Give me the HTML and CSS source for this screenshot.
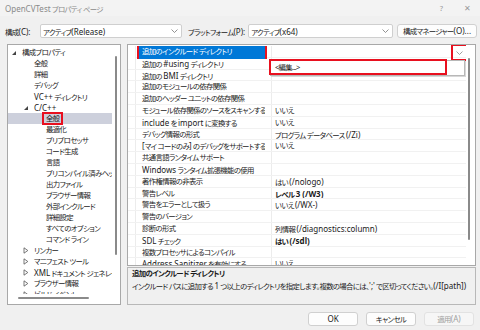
FILE: index.html
```html
<!DOCTYPE html>
<html lang="ja">
<head>
<meta charset="utf-8">
<link rel="stylesheet" href="styles.css">
</head>
<body>
<div class="titlebar">
  <span class="title"><span class="en">OpenCVTest</span> プロパティ ページ</span>
  <span class="tb-btns"><span class="help">?</span><span class="close">✕</span></span>
</div>
<div class="toolbar">
  <span class="lbl lbl1">構成<span class="en">(C):</span></span>
  <div class="select sel1"><span>アクティブ<span class="en">(Release)</span></span><svg class="chev" width="7" height="4" viewBox="0 0 7 4"><polyline points="0.5,0.5 3.5,3.5 6.5,0.5" fill="none" stroke="#777" stroke-width="0.8"/></svg></div>
  <span class="lbl lbl2">プラットフォーム<span class="en">(P):</span></span>
  <div class="select sel2"><span>アクティブ<span class="en">(x64)</span></span><svg class="chev" width="7" height="4" viewBox="0 0 7 4"><polyline points="0.5,0.5 3.5,3.5 6.5,0.5" fill="none" stroke="#777" stroke-width="0.8"/></svg></div>
  <button class="btn mgr">構成マネージャー<span class="en">(O)...</span></button>
</div>
<div class="main">
  <div class="tree">
    <div class="tree-list">
      <div class="node l0"><span class="tg"><svg width="6" height="6" viewBox="0 0 6 6"><polygon points="5,1 5,5 1,5" fill="#444"/></svg></span><span class="lab">構成プロパティ</span></div>
      <div class="node l1"><span class="tg"></span><span class="lab">全般</span></div>
      <div class="node l1"><span class="tg"></span><span class="lab">詳細</span></div>
      <div class="node l1"><span class="tg"></span><span class="lab">デバッグ</span></div>
      <div class="node l1"><span class="tg"></span><span class="lab"><span class="en">VC++</span> ディレクトリ</span></div>
      <div class="node l1"><span class="tg"><svg width="6" height="6" viewBox="0 0 6 6"><polygon points="5,1 5,5 1,5" fill="#444"/></svg></span><span class="lab"><span class="en">C/C++</span></span></div>
      <div class="node l2 sel"><span class="tg"></span><span class="lab mark">全般</span></div>
      <div class="node l2"><span class="tg"></span><span class="lab">最適化</span></div>
      <div class="node l2"><span class="tg"></span><span class="lab">プリプロセッサ</span></div>
      <div class="node l2"><span class="tg"></span><span class="lab">コード生成</span></div>
      <div class="node l2"><span class="tg"></span><span class="lab">言語</span></div>
      <div class="node l2"><span class="tg"></span><span class="lab">プリコンパイル済みヘッダー</span></div>
      <div class="node l2"><span class="tg"></span><span class="lab">出力ファイル</span></div>
      <div class="node l2"><span class="tg"></span><span class="lab">ブラウザー情報</span></div>
      <div class="node l2"><span class="tg"></span><span class="lab">外部インクルード</span></div>
      <div class="node l2"><span class="tg"></span><span class="lab">詳細設定</span></div>
      <div class="node l2"><span class="tg"></span><span class="lab">すべてのオプション</span></div>
      <div class="node l2"><span class="tg"></span><span class="lab">コマンド ライン</span></div>
      <div class="node l1"><span class="tg"><svg width="6" height="7" viewBox="0 0 6 7"><polygon points="1,0.8 4.8,3.5 1,6.2" fill="none" stroke="#555" stroke-width="0.8"/></svg></span><span class="lab">リンカー</span></div>
      <div class="node l1"><span class="tg"><svg width="6" height="7" viewBox="0 0 6 7"><polygon points="1,0.8 4.8,3.5 1,6.2" fill="none" stroke="#555" stroke-width="0.8"/></svg></span><span class="lab">マニフェスト ツール</span></div>
      <div class="node l1"><span class="tg"><svg width="6" height="7" viewBox="0 0 6 7"><polygon points="1,0.8 4.8,3.5 1,6.2" fill="none" stroke="#555" stroke-width="0.8"/></svg></span><span class="lab"><span class="en">XML</span> ドキュメント ジェネレーター</span></div>
      <div class="node l1"><span class="tg"><svg width="6" height="7" viewBox="0 0 6 7"><polygon points="1,0.8 4.8,3.5 1,6.2" fill="none" stroke="#555" stroke-width="0.8"/></svg></span><span class="lab">ブラウザー情報</span></div>
      <div class="node l1"><span class="tg"><svg width="6" height="7" viewBox="0 0 6 7"><polygon points="1,0.8 4.8,3.5 1,6.2" fill="none" stroke="#555" stroke-width="0.8"/></svg></span><span class="lab">ビルド イベント</span></div>
    </div>
    <div class="vscroll"><div class="thumb"></div></div>
    <div class="hscroll"><div class="thumb"></div></div>
  </div>
  <div class="right">
    <div class="grid">
      <div class="rows">
        <div class="row"><span class="gut"></span><span class="name"><span class="nl selected">追加のインクルード ディレクトリ</span></span><span class="val edit"><span class="ddbtn"><svg width="7" height="4" viewBox="0 0 7 4"><polyline points="0.5,0.5 3.5,3.5 6.5,0.5" fill="none" stroke="#888" stroke-width="0.8"/></svg></span></span></div>
        <div class="row"><span class="gut"></span><span class="name"><span class="nl">追加の <span class="en">#using</span> ディレクトリ</span></span><span class="val"></span></div>
        <div class="row"><span class="gut"></span><span class="name"><span class="nl">追加の <span class="en">BMI</span> ディレクトリ</span></span><span class="val"></span></div>
        <div class="row"><span class="gut"></span><span class="name"><span class="nl">追加のモジュールの依存関係</span></span><span class="val"></span></div>
        <div class="row"><span class="gut"></span><span class="name"><span class="nl">追加のヘッダー ユニットの依存関係</span></span><span class="val"></span></div>
        <div class="row"><span class="gut"></span><span class="name"><span class="nl">モジュール依存関係のソースをスキャンする</span></span><span class="val">いいえ</span></div>
        <div class="row"><span class="gut"></span><span class="name"><span class="nl"><span class="en">include</span> を <span class="en">import</span> に変換する</span></span><span class="val">いいえ</span></div>
        <div class="row"><span class="gut"></span><span class="name"><span class="nl">デバッグ情報の形式</span></span><span class="val">プログラム データベース <span class="en">(/Zi)</span></span></div>
        <div class="row"><span class="gut"></span><span class="name"><span class="nl"><span class="en">[</span>マイ コードのみ<span class="en">]</span> のデバッグをサポートする</span></span><span class="val">いいえ</span></div>
        <div class="row"><span class="gut"></span><span class="name"><span class="nl">共通言語ランタイム サポート</span></span><span class="val"></span></div>
        <div class="row"><span class="gut"></span><span class="name"><span class="nl"><span class="en">Windows</span> ランタイム拡張機能の使用</span></span><span class="val"></span></div>
        <div class="row"><span class="gut"></span><span class="name"><span class="nl">著作権情報の非表示</span></span><span class="val">はい <span class="en">(/nologo)</span></span></div>
        <div class="row"><span class="gut"></span><span class="name"><span class="nl">警告レベル</span></span><span class="val b">レベル <span class="en">3 (/W3)</span></span></div>
        <div class="row"><span class="gut"></span><span class="name"><span class="nl">警告をエラーとして扱う</span></span><span class="val">いいえ <span class="en">(/WX-)</span></span></div>
        <div class="row"><span class="gut"></span><span class="name"><span class="nl">警告のバージョン</span></span><span class="val"></span></div>
        <div class="row"><span class="gut"></span><span class="name"><span class="nl">診断の形式</span></span><span class="val">列情報 <span class="en">(/diagnostics:column)</span></span></div>
        <div class="row"><span class="gut"></span><span class="name"><span class="nl"><span class="en">SDL</span> チェック</span></span><span class="val b">はい <span class="en">(/sdl)</span></span></div>
        <div class="row"><span class="gut"></span><span class="name"><span class="nl">複数プロセッサによるコンパイル</span></span><span class="val"></span></div>
        <div class="row"><span class="gut"></span><span class="name"><span class="nl"><span class="en">Address Sanitizer</span> を有効にする</span></span><span class="val">いいえ</span></div>
      </div>
      <div class="gscroll"><div class="thumb"></div></div>
      <div class="ddlist"><div class="dditem">&lt;編集...&gt;</div></div>
    </div>
    <div class="desc">
      <div class="dt">追加のインクルード ディレクトリ</div>
      <div class="dd">インクルード パスに追加する <span class="en">1</span> つ以上のディレクトリを指定します。複数の場合には、<span class="en">';'</span> で区切ってください。<span class="en">(/I[path])</span></div>
    </div>
  </div>
</div>
<div class="footer">
  <button class="btn fbtn"><span class="en">OK</span></button>
  <button class="btn fbtn">キャンセル</button>
  <button class="btn fbtn dis">適用<span class="en">(A)</span></button>
</div>
</body>
</html>
```
FILE: styles.css
```css
* { box-sizing: border-box; }
body {
  margin: 0;
  width: 480px;
  height: 330px;
  overflow: hidden;
  background: #f0f0f0;
  font-family: "Noto Sans", "Noto Sans CJK JP", sans-serif;
  font-size: 7.4px;
  color: #1a1a1a;
  font-feature-settings: "palt";
  letter-spacing: -0.65px;
  white-space: nowrap;
}
.en { font-size: 8px; letter-spacing: 0; }
.titlebar {
  height: 16px;
  display: flex;
  align-items: center;
  padding: 0 9px 0 5px;
  background: #f3f3f3;
}
.title { color: #8a8a8a; flex: 1; padding-top: 1px; }
.tb-btns { display: flex; gap: 21px; color: #999; letter-spacing: 0; font-size: 7.5px; }

.toolbar {
  margin-top: 8px;
  height: 14px;
  display: flex;
  align-items: center;
  padding: 0 3px 0 5px;
}
.lbl { flex: none; }
.lbl1 { width: 35px; }
.lbl2 { margin-left: 6px; margin-right: 3px; }
.select {
  flex: none;
  height: 14px;
  background: #fff;
  border: 1px solid #cfcfcf;
  border-radius: 2px;
  display: flex;
  align-items: center;
  justify-content: space-between;
  padding: 0 3px 0 2px;
}
.sel1 { width: 142px; }
.sel2 { width: 145px; }
.chev { display: block; }
.btn {
  font: inherit;
  letter-spacing: inherit;
  color: #1a1a1a;
  background: #fdfdfd;
  border: 1px solid #d0d0d0;
  border-radius: 3px;
  padding: 0;
  height: 14px;
  line-height: 12px;
  white-space: nowrap;
}
.mgr { width: 80px; margin-left: auto; flex: none; }

.main {
  margin-top: 6px;
  height: 261px;
  display: flex;
  padding-left: 7px;
  gap: 6px;
}
.tree {
  width: 114px;
  border: 1px solid #a8a8a8;
  background: #fff;
  display: grid;
  grid-template-columns: 1fr 8px;
  grid-template-rows: 1fr 10px;
  min-width: 0;
}
.tree-list {
  padding-top: 2px;
  overflow: hidden;
  min-height: 0;
  min-width: 0;
}
.node {
  height: 11px;
  display: flex;
  align-items: center;
}
.node.l1 { padding-left: 12px; }
.node.l2 { padding-left: 24px; }
.node.sel { background: #cdd0dc; }
.tg {
  width: 11px;
  flex: none;
  display: flex;
  align-items: center;
  justify-content: center;
}
.tg svg { display: block; }
.lab { padding: 0 3px; line-height: 11px; }
.lab.mark { outline: 2px solid #e8101f; outline-offset: -1px; }
.vscroll { grid-column: 2; grid-row: 1; }
.vscroll .thumb {
  width: 2px;
  margin-left: 3px;
  margin-top: 11px;
  height: 199px;
  background: #8a8a8a;
  border-radius: 1px;
}
.hscroll { grid-column: 1; grid-row: 2; }
.hscroll .thumb {
  height: 2px;
  margin-top: 3px;
  margin-left: 10px;
  width: 71px;
  background: #8a8a8a;
  border-radius: 1px;
}

.right {
  width: 349px;
  display: flex;
  flex-direction: column;
  gap: 1px;
}
.grid {
  height: 222px;
  border: 1px solid #a8a8a8;
  background: #fff;
  display: flex;
  position: relative;
  overflow: hidden;
}
.rows { flex: 1; padding-top: 1px; overflow: hidden; }
.row {
  height: 11.8px;
  display: grid;
  grid-template-columns: 8px 135px 1fr;
  border-bottom: 1px solid #f1f1f1;
}
.gut { background: #fff; border-right: 1px solid #ececec; }
.name { padding: 0 6px 0 3px; overflow: hidden; }
.nl { display: block; height: 100%; padding-left: 3px; line-height: 11px; overflow: hidden; }
.nl.selected {
  background: #0078d7;
  color: #fff;
  outline: 2px solid #e8101f;
  outline-offset: 0px;
}
.val { border-left: 1px solid #ececec; padding-left: 3px; line-height: 11px; overflow: hidden; }
.val.b { font-weight: bold; }
.val.edit { display: flex; justify-content: flex-end; overflow: visible; padding-right: 0; }
.ddbtn {
  width: 13px;
  height: 13px;
  display: flex;
  align-items: center;
  justify-content: center;
  outline: 2px solid #e8101f;
  outline-offset: 0px;
}
.gscroll { width: 9px; flex: none; }
.gscroll .thumb {
  width: 2px;
  margin-left: 2px;
  margin-top: 13px;
  height: 182px;
  background: #8a8a8a;
  border-radius: 1px;
}
.ddlist {
  position: absolute;
  left: 142px;
  top: 15px;
  width: 195px;
  height: 16px;
  background: #fff;
  border: 1px solid #b8b8b8;
  box-shadow: 1px 1px 0 #d8d8d8;
}
.dditem {
  width: 174px;
  height: 12px;
  line-height: 12px;
  padding-left: 4px;
  outline: 2px solid #e8101f;
  outline-offset: 0px;
}
.desc {
  height: 38px;
  border: 1px solid #b8b8b8;
  background: #f0f0f0;
  padding: 0 4px;
  line-height: 11.5px;
}
.dt { font-weight: bold; }
.dd { overflow: hidden; }

.footer {
  margin-top: 7px;
  display: flex;
  justify-content: flex-end;
  gap: 8px;
  padding-right: 6px;
}
.fbtn { width: 50px; height: 14px; }
.fbtn.dis { color: #a0a0a0; background: #f6f6f6; border-color: #e2e2e2; }
```
